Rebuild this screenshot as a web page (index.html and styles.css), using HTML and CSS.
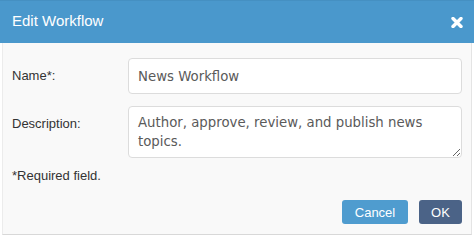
FILE: index.html
```html
<!DOCTYPE html>
<html lang="en">
<head>
    <meta charset="UTF-8">
    <title>Edit Workflow</title>
    <link rel="stylesheet" href="styles.css">
</head>
<body>
    <div class="dialog">
        <div class="dialog-header">
            <span class="dialog-title">Edit Workflow</span>
            <span class="close" title="Close">
                <svg width="12" height="11" viewBox="0 0 12 11"><path d="M2 1.5 L10 9.5 M10 1.5 L2 9.5" stroke="#fff" stroke-width="3.4" stroke-linecap="round"/></svg>
            </span>
        </div>
        <div class="dialog-body">
            <div class="row">
                <label class="field-label">Name*:</label>
                <input class="text-input" type="text" value="News Workflow">
            </div>
            <div class="row">
                <label class="field-label">Description:</label>
                <textarea class="text-area" rows="2">Author, approve, review, and publish news topics.</textarea>
            </div>
            <div class="note">*Required field.</div>
            <div class="buttons">
                <button class="btn btn-cancel">Cancel</button>
                <button class="btn btn-ok">OK</button>
            </div>
        </div>
    </div>
</body>
</html>
```

FILE: styles.css
```css
body { margin: 0; background: #fff; font-family: Arial, "Liberation Sans", sans-serif; font-size: 13px; color: #333; }
.dialog { width: 474px; height: 235px; display: flex; flex-direction: column; }
.dialog-header { background: #4a98cc; color: #fff; height: 43px; display: flex; align-items: center; justify-content: space-between; padding: 0 12px 4px 12px; box-sizing: border-box; border-top: 1px solid #4590c2; }
.dialog-title { font-size: 15px; }
.close { display: flex; margin-top: 5px; margin-right: -1px; }
.dialog-body { flex: 1; background: #f9f9f9; border-left: 1px solid #ececec; border-right: 1px solid #e4e4e4; border-bottom: 1px solid #d8d8d8; margin: 0 2px 0 2px; padding: 15px 9px 0 9px; }
.row { display: flex; align-items: flex-start; margin-bottom: 12px; }
.field-label { width: 116px; padding-top: 10px; }
.text-input, .text-area { flex: 1; box-sizing: border-box; border: 1px solid #dcdcdc; border-radius: 4px; background: #fff; font-family: "DejaVu Sans", Verdana, sans-serif; font-size: 13.3px; color: #5a5a5a; padding: 0 9px; }
.text-input { height: 36px; }
.text-area { height: 52px; padding-top: 6px; line-height: 19px; resize: vertical; }
.note { margin-top: -2px; line-height: 15px; }
.buttons { display: flex; justify-content: flex-end; gap: 11px; margin-top: 17px; }
.btn { border: none; border-radius: 3px; color: #fff; font-family: Arial, "Liberation Sans", sans-serif; font-size: 13px; height: 24px; padding: 0; }
.btn-cancel { background: #4f9ccf; width: 66px; }
.btn-ok { background: #4b6387; width: 43px; }
```
